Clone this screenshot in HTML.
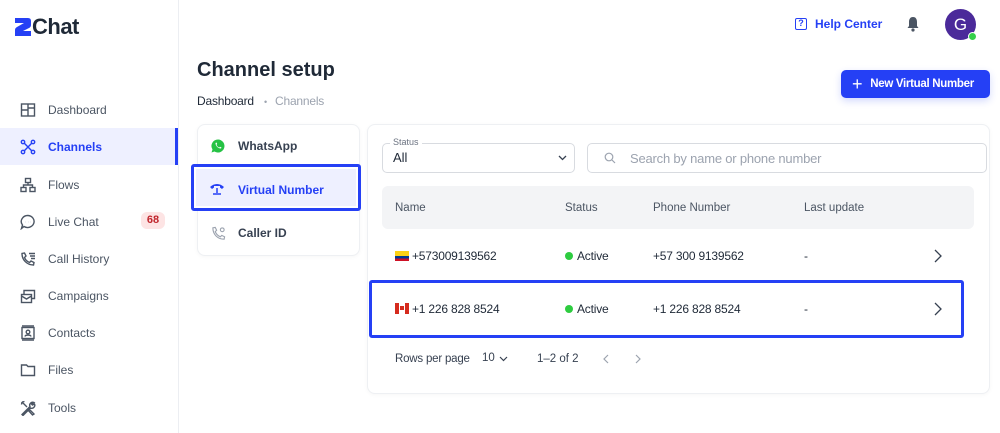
<!DOCTYPE html>
<html><head><meta charset="utf-8"><style>
*{box-sizing:border-box;margin:0;padding:0}
body{width:1000px;height:433px;overflow:hidden;background:#fff;font-family:"Liberation Sans",sans-serif;color:#1f2937;position:relative}
.abs{position:absolute}
.side{left:0;top:0;width:179px;height:433px;border-right:1px solid #eceef2}
.nav{left:0;width:178px;height:37px;display:flex;align-items:center;padding-left:20px;font-size:12px;color:#4b5563}
.nav svg{width:16px;height:16px;margin-right:12px;stroke:#4b5563;fill:none;stroke-width:1.4}
.nav.act{background:#eef0ff;color:#2540f5;font-weight:bold}
.nav.act svg{stroke:#2540f5}
.main{left:180px;top:0;right:0;bottom:0;background:#fff}
.card{background:#fff;border:1px solid #eef0f3;border-radius:8px;box-shadow:0 1px 4px rgba(0,0,0,.04)}
.th{font-size:11.5px;color:#4b5563}
.td{font-size:12px;color:#1f2937;letter-spacing:-0.2px}
.dot{display:inline-block;width:8px;height:8px;border-radius:50%;background:#2ecc40;margin-right:4px;vertical-align:-0px}
</style></head><body>
<div class="abs side">
 <div class="abs" style="left:15px;top:14px;font-size:22px;font-weight:bold;color:#1f2937;letter-spacing:-0.5px;display:flex;align-items:center">
  <svg width="16" height="18" viewBox="0 0 16 18" style="margin-right:1px"><path d="M0 0H13Q16 0 16 3V7Q16 9 14 10L8 13H16V18H0V12Q0 10 2 9L9 5H0Z" fill="#2540f5"/></svg><span>Chat</span></div>
 <div class="abs nav" style="top:91px"><svg viewBox="0 0 16 16"><rect x="1.5" y="2" width="13" height="12"/><path d="M8 2V14M1.5 8H8M8 6H14.5"/></svg>Dashboard</div>
 <div class="abs nav act" style="top:128px"><svg viewBox="0 0 16 16"><circle cx="3" cy="3" r="1.7"/><circle cx="13" cy="3" r="1.7"/><circle cx="3" cy="13" r="1.7"/><circle cx="13" cy="13" r="1.7"/><path d="M4.3 4.3L11.7 11.7M11.7 4.3L4.3 11.7"/></svg>Channels</div>
 <div class="abs" style="left:175px;top:128px;width:3px;height:37px;background:#2540f5"></div>
 <div class="abs nav" style="top:166px"><svg viewBox="0 0 16 16"><rect x="5.5" y="1.5" width="5" height="4"/><rect x="1" y="10.5" width="5" height="4"/><rect x="10" y="10.5" width="5" height="4"/><path d="M8 5.5V8M3.5 10.5V8H12.5V10.5"/></svg>Flows</div>
 <div class="abs nav" style="top:203px"><svg viewBox="0 0 16 16"><path d="M8 1.5A6.5 6 0 1 1 4 12.5L1.5 14.5L2.5 11A6.5 6 0 0 1 8 1.5Z"/><path d="M5.5 8h.1M8 8h.1M10.5 8h.1"/></svg>Live Chat</div>
 <div class="abs" style="left:141px;top:212px;width:24px;height:17px;border-radius:6px;background:#fde4e4;color:#c0262d;font-size:11px;font-weight:bold;text-align:center;line-height:17px">68</div>
 <div class="abs nav" style="top:240px"><svg viewBox="0 0 16 16"><path d="M2 2.5C2 9 7 14 13.5 14L14 11.5L11 10L9.5 11.5C7 10.5 5.5 9 4.5 6.5L6 5L4.5 2Z"/><path d="M9 2.5H15M10 5H15M11 7.5H15"/></svg>Call History</div>
 <div class="abs nav" style="top:277px"><svg viewBox="0 0 16 16"><rect x="1.5" y="6.5" width="10" height="8"/><path d="M4 6.5V2.5H14.5V10.5H11.5M1.5 8L6.5 11L11.5 8"/></svg>Campaigns</div>
 <div class="abs nav" style="top:314px"><svg viewBox="0 0 16 16"><rect x="2" y="2.5" width="12" height="11"/><path d="M2 1H14M2 15H14"/><circle cx="8" cy="7" r="1.8"/><path d="M5 11.5C5.5 9.5 10.5 9.5 11 11.5"/></svg>Contacts</div>
 <div class="abs nav" style="top:351px"><svg viewBox="0 0 16 16"><path d="M1.5 3H6.5L8 4.5H14.5V13.5H1.5Z"/></svg>Files</div>
 <div class="abs nav" style="top:389px"><svg viewBox="0 0 16 16"><path d="M2 2L7 7M2 2L1.5 4.5M2 2L4.5 1.5M9 9L14 14L12.5 15L8 10M14 2.5A3 3 0 0 0 10 6.5L2 14.5L3 15.5L10.5 8A3 3 0 0 0 14.5 4L12.5 5L11.5 4Z"/></svg>Tools</div>
</div>
<div class="abs" style="left:795px;top:17px;display:flex;align-items:center;color:#2540f5;font-size:12px;font-weight:bold"><span style="display:inline-block;width:12px;height:12px;border:1.5px solid #2540f5;border-radius:2px;font-size:9px;line-height:9px;text-align:center;margin-right:8px">?</span>Help Center</div>
<svg class="abs" style="left:906px;top:16px" width="14" height="16" viewBox="0 0 14 16"><path d="M7 1C4 1 3 3.5 3 6V10L1.5 12H12.5L11 10V6C11 3.5 10 1 7 1Z" fill="#4b5563"/><circle cx="7" cy="14" r="1.6" fill="#4b5563"/></svg>
<div class="abs" style="left:945px;top:9px;width:31px;height:31px;border-radius:50%;background:#4b2a9a;color:#fff;font-size:17px;text-align:center;line-height:31px">G</div>
<div class="abs" style="left:968px;top:32px;width:9px;height:9px;border-radius:50%;background:#35d04a;border:1.5px solid #fff"></div>
<div class="abs" style="left:197px;top:59px;font-size:20px;font-weight:bold;color:#1f2937">Channel setup</div>
<div class="abs" style="left:197px;top:94px;font-size:12px;color:#1f2937;letter-spacing:-0.2px">Dashboard <span style="color:#9ca3af;margin:0 8px 0 7px;font-size:9px">•</span><span style="color:#9ca3af">Channels</span></div>
<div class="abs" style="left:841px;top:70px;width:149px;height:28px;background:#2540f5;border-radius:5px;color:#fff;font-size:11.5px;font-weight:bold;display:flex;align-items:center;padding-left:11px;letter-spacing:-0.3px;box-shadow:0 3px 8px rgba(37,64,245,.2);white-space:nowrap"><span style="font-size:18px;font-weight:normal;margin-right:8px;line-height:1">+</span>New Virtual Number</div>
<div class="abs card" style="left:197px;top:124px;width:163px;height:132px"></div>
<svg class="abs" style="left:211px;top:139px" width="14" height="14" viewBox="0 0 14 14"><path d="M7 0.5A6.5 6.5 0 1 1 3.5 12.5L0.5 13.5L1.5 10.5A6.5 6.5 0 0 1 7 0.5Z" fill="#25c244"/><path d="M4.5 4C4.5 7 7 9.5 10 9.5L10.5 8.5L9 7.8L8.3 8.5C7 8 6 7 5.5 5.7L6.2 5L5.5 3.5Z" fill="#fff"/></svg>
<div class="abs" style="left:238px;top:139px;font-size:12px;font-weight:bold;color:#374151">WhatsApp</div>
<div class="abs" style="left:191px;top:164px;width:170px;height:47px;border:3px solid #2540f5;border-radius:3px;background:#fff;padding:2px"><div style="width:100%;height:100%;background:#eef0ff"></div></div>
<svg class="abs" style="left:209px;top:182px" width="16" height="14" viewBox="0 0 16 14"><path d="M1 5C5 1 11 1 15 5L13 7L11 5.5V4H5V5.5L3 7Z" fill="#2540f5"/><path d="M8 6V11M4 12H12" stroke="#2540f5" stroke-width="1.5"/></svg>
<div class="abs" style="left:238px;top:183px;font-size:12px;font-weight:bold;color:#2540f5">Virtual Number</div>
<svg class="abs" style="left:211px;top:226px" width="15" height="15" viewBox="0 0 16 16"><path d="M2 2C2 9 7 14 14 14L14.5 11.5L11.5 10L10 11.5C7.5 10.5 5.5 8.5 4.5 6L6 4.5L4.5 1.5Z" fill="none" stroke="#9ca3af" stroke-width="1.2"/><circle cx="12" cy="4" r="2" fill="none" stroke="#9ca3af" stroke-width="1.2"/></svg>
<div class="abs" style="left:238px;top:226px;font-size:12px;font-weight:bold;color:#374151">Caller ID</div>
<div class="abs card" style="left:367px;top:124px;width:623px;height:270px"></div>
<div class="abs" style="left:382px;top:143px;width:193px;height:30px;border:1px solid #d8dbe0;border-radius:5px"></div>
<div class="abs" style="left:390px;top:137px;background:#fff;padding:0 3px;font-size:9px;color:#6b7280">Status</div>
<div class="abs" style="left:393px;top:150px;font-size:13px;color:#1f2937">All</div>
<svg class="abs" style="left:558px;top:155px" width="9" height="6" viewBox="0 0 9 6"><path d="M1 1L4.5 4.5L8 1" stroke="#374151" stroke-width="1.3" fill="none"/></svg>
<div class="abs" style="left:587px;top:143px;width:400px;height:30px;border:1px solid #d8dbe0;border-radius:5px"></div>
<svg class="abs" style="left:604px;top:152px" width="12" height="12" viewBox="0 0 12 12"><circle cx="5" cy="5" r="3.8" stroke="#9ca3af" stroke-width="1.2" fill="none"/><path d="M8 8L11 11" stroke="#9ca3af" stroke-width="1.2"/></svg>
<div class="abs" style="left:630px;top:151px;font-size:13px;color:#9ca3af;letter-spacing:-0.2px">Search by name or phone number</div>
<div class="abs" style="left:382px;top:186px;width:592px;height:43px;background:#f3f4f6;border-radius:6px"></div>
<div class="abs th" style="left:395px;top:202px">Name</div>
<div class="abs th" style="left:565px;top:202px">Status</div>
<div class="abs th" style="left:653px;top:202px">Phone Number</div>
<div class="abs th" style="left:804px;top:202px">Last update</div>
<div class="abs" style="left:395px;top:251px;width:14px;height:10px;background:linear-gradient(#fcd116 0 50%,#003893 50% 75%,#ce1126 75%)"></div>
<div class="abs td" style="left:412px;top:249px">+573009139562</div>
<div class="abs td" style="left:565px;top:249px"><span class="dot"></span>Active</div>
<div class="abs td" style="left:653px;top:249px">+57 300 9139562</div>
<div class="abs td" style="left:804px;top:249px">-</div>
<svg class="abs" style="left:934px;top:249px" width="8" height="14" viewBox="0 0 8 14"><path d="M1 1L7 7L1 13" stroke="#374151" stroke-width="1.3" fill="none"/></svg>
<div class="abs" style="left:369px;top:280px;width:595px;height:58px;border:3px solid #2540f5;border-radius:3px"></div>
<div class="abs" style="left:395px;top:303px;width:14px;height:11px;background:linear-gradient(90deg,#d52b1e 0 28%,#fff 28% 72%,#d52b1e 72%)"></div>
<div class="abs" style="left:400px;top:306px;width:4px;height:4px;background:#d52b1e"></div>
<div class="abs td" style="left:412px;top:302px">+1 226 828 8524</div>
<div class="abs td" style="left:565px;top:302px"><span class="dot"></span>Active</div>
<div class="abs td" style="left:653px;top:302px">+1 226 828 8524</div>
<div class="abs td" style="left:804px;top:302px">-</div>
<svg class="abs" style="left:934px;top:302px" width="8" height="14" viewBox="0 0 8 14"><path d="M1 1L7 7L1 13" stroke="#374151" stroke-width="1.3" fill="none"/></svg>
<div class="abs" style="left:395px;top:353px;font-size:11.5px;color:#374151;letter-spacing:-0.2px">Rows per page</div>
<div class="abs" style="left:482px;top:352px;font-size:11.5px;color:#374151">10</div>
<svg class="abs" style="left:499px;top:356px" width="9" height="6" viewBox="0 0 9 6"><path d="M1 1L4.5 4.5L8 1" stroke="#374151" stroke-width="1.2" fill="none"/></svg>
<div class="abs" style="left:537px;top:353px;font-size:11.5px;color:#374151">1–2 of 2</div>
<svg class="abs" style="left:603px;top:354px" width="6" height="10" viewBox="0 0 6 10"><path d="M5 1L1 5L5 9" stroke="#9ca3af" stroke-width="1.2" fill="none"/></svg>
<svg class="abs" style="left:635px;top:354px" width="6" height="10" viewBox="0 0 6 10"><path d="M1 1L5 5L1 9" stroke="#9ca3af" stroke-width="1.2" fill="none"/></svg>
</body></html>
